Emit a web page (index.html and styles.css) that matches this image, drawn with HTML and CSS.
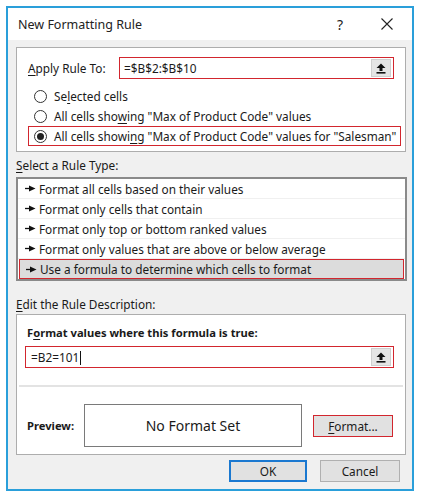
FILE: index.html
```html
<!DOCTYPE html>
<html>
<head>
<meta charset="utf-8">
<link rel="stylesheet" href="styles.css">
</head>
<body>
<div class="window">
  <div class="titlebar">
    <span class="title">New Formatting Rule</span>
    <span class="help">?</span>
    <svg class="close" width="12" height="12" viewBox="0 0 12 12"><path d="M0.5 0.5 L11.5 11.5 M11.5 0.5 L0.5 11.5" stroke="#222" stroke-width="1.1" fill="none"/></svg>
  </div>
  <div class="content">
    <div class="box applybox">
      <div class="applyrow">
        <span class="label"><u>A</u>pply Rule To:</span>
        <div class="input red">
          <span class="val">=$B$2:$B$10</span>
          <span class="upbtn"><svg width="10" height="11" viewBox="0 0 10 11"><path d="M5 0.5 L9.5 5 L6.5 5 L6.5 8 L3.5 8 L3.5 5 L0.5 5 Z" fill="#111"/><rect x="0.5" y="9" width="9" height="1.6" fill="#111"/></svg></span>
        </div>
      </div>
      <div class="radio"><span class="circle"></span><span>Se<u>l</u>ected cells</span></div>
      <div class="radio"><span class="circle"></span><span>All cells sho<u>w</u>ing "Max of Product Code" values</span></div>
      <div class="radio red"><span class="circle on"></span><span>All cells showi<u>n</u>g "Max of Product Code" values for "Salesman"</span></div>
    </div>

    <div class="section-label"><u>S</u>elect a Rule Type:</div>
    <div class="listbox">
      <div class="item"><svg class="arr" width="11" height="7" viewBox="0 0 11 7"><path d="M0 3.5 H5" stroke="#111" stroke-width="1.3"/><path d="M4 0.5 L10.5 3.5 L4 6.5 Z" fill="#111"/></svg>Format all cells based on their values</div>
      <div class="item"><svg class="arr" width="11" height="7" viewBox="0 0 11 7"><path d="M0 3.5 H5" stroke="#111" stroke-width="1.3"/><path d="M4 0.5 L10.5 3.5 L4 6.5 Z" fill="#111"/></svg>Format only cells that contain</div>
      <div class="item"><svg class="arr" width="11" height="7" viewBox="0 0 11 7"><path d="M0 3.5 H5" stroke="#111" stroke-width="1.3"/><path d="M4 0.5 L10.5 3.5 L4 6.5 Z" fill="#111"/></svg>Format only top or bottom ranked values</div>
      <div class="item"><svg class="arr" width="11" height="7" viewBox="0 0 11 7"><path d="M0 3.5 H5" stroke="#111" stroke-width="1.3"/><path d="M4 0.5 L10.5 3.5 L4 6.5 Z" fill="#111"/></svg>Format only values that are above or below average</div>
      <div class="item sel"><svg class="arr" width="11" height="7" viewBox="0 0 11 7"><path d="M0 3.5 H5" stroke="#111" stroke-width="1.3"/><path d="M4 0.5 L10.5 3.5 L4 6.5 Z" fill="#111"/></svg>Use a formula to determine which cells to format</div>
    </div>

    <div class="section-label edit"><u>E</u>dit the Rule Description:</div>
    <div class="box descbox">
      <div class="bold-label">F<u>o</u>rmat values where this formula is true:</div>
      <div class="input red formula">
        <span class="val">=B2=101<span class="caret"></span></span>
        <span class="upbtn"><svg width="10" height="11" viewBox="0 0 10 11"><path d="M5 0.5 L9.5 5 L6.5 5 L6.5 8 L3.5 8 L3.5 5 L0.5 5 Z" fill="#111"/><rect x="0.5" y="9" width="9" height="1.6" fill="#111"/></svg></span>
      </div>
      <div class="sep"></div>
      <div class="previewrow">
        <span class="bold-label pv">Preview:</span>
        <div class="preview">No Format Set</div>
        <div class="btn red fmt"><u>F</u>ormat...</div>
      </div>
    </div>

    <div class="buttons">
      <div class="btn ok">OK</div>
      <div class="btn cancel">Cancel</div>
    </div>
  </div>
</div>
</body>
</html>
```
FILE: styles.css
```css
* { box-sizing: border-box; }
html, body { margin: 0; padding: 0; background: #fff; }
body {
  font-family: "Noto Sans", "Open Sans", sans-serif;
  font-size: 11.8px;
  color: #1a1a1a;
}
u { text-decoration: underline; text-underline-offset: 2px; }

.window {
  margin: 6px 0 0 6px;
  width: 408px;
  height: 485px;
  border: 2px solid #2a9fda;
  background: #f0f0f0;
  display: flex;
  flex-direction: column;
}
.titlebar {
  height: 32px;
  background: #fff;
  display: flex;
  align-items: center;
  padding-left: 10px;
  flex: none;
}
.title { font-size: 12.5px; color: #222; flex: 1; }
.help { font-size: 14px; color: #222; margin-right: 38px; }
.close { margin-right: 19px; }

.content {
  padding: 7px 6px 0 8px;
  display: flex;
  flex-direction: column;
}
.box {
  background: #fff;
  border: 1px solid #adadad;
}
.applybox {
  height: 105px;
  padding: 9px 4px 0 11px;
}
.applyrow {
  display: flex;
  align-items: center;
  height: 22px;
  margin-bottom: 7px;
  margin-right: 7px;
}
.label { width: 91px; }
.input {
  height: 22px;
  flex: 1;
  display: flex;
  align-items: center;
  padding-left: 4px;
  padding-right: 2px;
  background: #fff;
}
.red { border: 1px solid #d2262e; }
.input .val { flex: 1; }
.upbtn {
  width: 20px;
  height: 18px;
  background: #e5e5e5;
  border: 1px solid #cfcfcf;
  display: flex;
  align-items: center;
  justify-content: center;
}
.radio {
  height: 20px;
  display: flex;
  align-items: center;
  padding-left: 5px;
  border: 1px solid transparent;
  white-space: nowrap;
}
.radio.red { border-color: #d2262e; }
.circle {
  width: 13px;
  height: 13px;
  border: 1px solid #333;
  border-radius: 50%;
  margin-right: 7px;
  background: #fff;
  display: flex;
  align-items: center;
  justify-content: center;
  flex: none;
}
.circle.on::after {
  content: "";
  width: 7px;
  height: 7px;
  border-radius: 50%;
  background: #222;
}

.section-label {
  height: 24px;
  margin-top: 1px;
  display: flex;
  align-items: center;
}
.listbox {
  background: #fff;
  border: 2px solid #8a8a8a;
  margin-right: -1px;
  height: 104px;
  padding-top: 0;
}
.item {
  height: 20px;
  display: flex;
  align-items: center;
  padding-left: 7px;
  border-bottom: 1px solid #f0f0f0;
}
.item .arr { margin-right: 3px; }
.item.sel {
  background: #dcdcdc;
  border: 1px solid #d2262e;
  margin: 0 1px;
  padding-left: 6px;
}
.section-label.edit {
  height: 33px;
  padding-top: 12px;
  margin-top: 0;
}
.descbox {
  height: 141px;
  padding: 0 11px 0 8px;
}
.bold-label {
  font-weight: bold;
  font-size: 11.2px;
}
.descbox > .bold-label {
  height: 31px;
  display: flex;
  align-items: center;
  padding-top: 3px;
  padding-left: 2px;
}
.formula { margin-top: 0; padding-left: 5px; }
.caret {
  display: inline-block;
  width: 1px;
  height: 14px;
  background: #111;
  vertical-align: -3px;
  margin-left: 1px;
}
.sep {
  height: 2px;
  background: #e3e3e3;
  margin: 17px -9px 0 -6px;
}
.previewrow {
  display: flex;
  align-items: center;
  margin-top: 17px;
}
.pv { width: 59px; padding-left: 2px; }
.preview {
  width: 218px;
  height: 43px;
  border: 1px solid #7a7a7a;
  display: flex;
  align-items: center;
  justify-content: center;
  font-size: 14px;
}
.btn {
  background: #e1e1e1;
  display: flex;
  align-items: center;
  justify-content: center;
  height: 22px;
}
.fmt { width: 80px; margin-left: 11px; }
.buttons {
  display: flex;
  justify-content: flex-end;
  margin-top: 5px;
  margin-right: 6px;
}
.ok {
  width: 78px;
  border: 2px solid #1a78d0;
  margin-right: 13px;
}
.cancel {
  width: 80px;
  border: 1px solid #b0b0b0;
}
```
